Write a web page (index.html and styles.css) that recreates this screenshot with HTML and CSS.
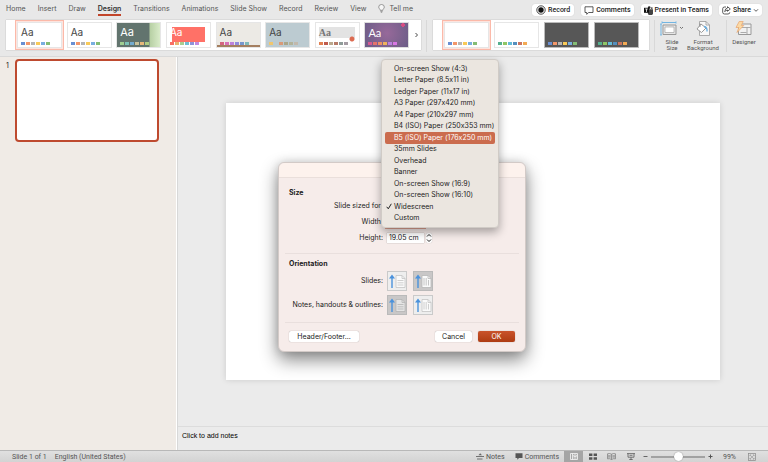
FILE: index.html
```html
<!DOCTYPE html>
<html lang="en">
<head>
<meta charset="utf-8">
<title>Presentation</title>
<link rel="stylesheet" href="styles.css">
</head>
<body>
<header class="top">
  <nav class="tabs">
    <a href="#">Home</a><a href="#">Insert</a><a href="#">Draw</a><a href="#" class="active">Design</a><a href="#">Transitions</a><a href="#">Animations</a><a href="#">Slide Show</a><a href="#">Record</a><a href="#">Review</a><a href="#">View</a>
    <a href="#" class="tell"><svg width="7" height="9" viewBox="0 0 7 9" fill="none" stroke="#777" stroke-width=".7"><path d="M2.2 6.3C2.2 5 .7 4.600 .7 3a2.800 2.500 0 0 1 5.600 0C6.300 4.600 4.800 5 4.800 6.300zM2.400 7.300h2.200M2.800 8.300h1.400" fill="#f6f6f6"/></svg>Tell me</a>
  </nav>
  <div class="actions">
    <button class="pill record"><svg width="10" height="10" viewBox="0 0 10 10"><circle cx="5" cy="5" r="4.200" fill="none" stroke="#222" stroke-width=".8"/><circle cx="5" cy="5" r="2.700" fill="#111"/></svg>Record</button>
    <button class="pill"><svg width="10" height="9" viewBox="0 0 10 9"><path d="M1 .8h8v5.700H4.700L2.700 8.300V6.500H1z" fill="none" stroke="#333" stroke-width=".8"/></svg>Comments</button>
    <button class="pill"><svg width="9" height="9" viewBox="0 0 9 9"><circle cx="5.200" cy="1.600" r="1.300" fill="#222"/><circle cx="7.800" cy="2.100" r=".9" fill="#444"/><path d="M3.500 3.200H9v3a2.600 2.600 0 0 1-5.200 1z" fill="#444"/><path d="M0 1.800h5v5H0z" fill="#111"/><path d="M1.200 3h2.600M2.500 3v2.900" stroke="#fff" stroke-width=".8"/></svg>Present in Teams</button>
    <button class="pill"><svg width="9" height="9" viewBox="0 0 9 9" fill="none" stroke="#333" stroke-width=".8"><path d="M4 1H2.500Q.7 1 .7 2.800v3.500Q.7 8 2.500 8H6q1.800 0 1.800-1.700"/><path d="M5.500.7 8.300 3 5.500 5.300V4Q3.800 4 2.800 5.700 3 2.200 5.500 2z"/></svg>Share<svg width="6" height="5" viewBox="0 0 6 5"><path d="M1 1.300l2 2 2-2" fill="none" stroke="#333" stroke-width=".8"/></svg></button>
  </div>
</header>

<section class="ribbon">
  <div class="gallery themes">
    <button class="thumb office picked"><span>Aa</span><i></i></button>
    <button class="thumb office"><span>Aa</span><i></i></button>
    <button class="thumb green"><span>Aa</span><i></i></button>
    <button class="thumb coral"><span>Aa</span><i></i></button>
    <button class="thumb wood"><span>Aa</span><i></i></button>
    <button class="thumb blue"><span>Aa</span><i></i></button>
    <button class="thumb stamp"><span>Aa</span><i></i></button>
    <button class="thumb ion"><span>Aa</span><i></i></button>
    <button class="more" aria-label="More themes"><svg width="5" height="6" viewBox="0 0 5 6"><path d="M1.500 1l2 2-2 2" fill="none" stroke="#333" stroke-width=".9"/></svg></button>
  </div>
  <div class="rule"></div>
  <div class="gallery variants">
    <button class="thumb office picked" aria-label="Variant 1"><i></i></button>
    <button class="thumb fresh" aria-label="Variant 2"><i></i></button>
    <button class="thumb office dark" aria-label="Variant 3"><i></i></button>
    <button class="thumb fresh dark" aria-label="Variant 4"><i></i></button>
  </div>
  <div class="rule"></div>
  <button class="tool size"><svg width="24" height="15" viewBox="0 0 24 15" fill="none"><path d="M2 1.500h14M1 3v11" stroke="#72b5e2"/><path d="M2 .3v2.400M16 .3v2.400M0 3h2M0 14h2" stroke="#72b5e2" stroke-width=".8"/><path d="M3 4h13v9.500H3z" fill="#e6e6e6" stroke="#999"/><path d="M5 6h9v5.500H5z" fill="#fff" stroke="#999" stroke-width=".6"/><path d="M20 6l1.500 1.500L23 6" stroke="#666" stroke-width=".9"/></svg>Slide<br>Size</button>
  <button class="tool format"><svg width="15" height="15" viewBox="0 0 15 15" fill="none"><path d="M3.500.5H10L13.500 4v10.500h-10z" fill="#f8f8f8" stroke="#999" stroke-width=".8"/><path d="M10 .5V4h3.500" stroke="#999" stroke-width=".8"/><path d="M5 3l5 4-4.500 4.500L1 8z" fill="#fff" stroke="#999"/><path d="M4 6V2.500" stroke="#888" stroke-width=".8"/><path d="M8 5.500q3.500.5 3 5" stroke="#68aee0" stroke-width="1.300"/></svg>Format<br>Background</button>
  <div class="rule"></div>
  <button class="tool designer"><svg width="18" height="15" viewBox="0 0 18 15" fill="none"><path d="M3.500 3h12.500v10.500h-12.500z" fill="#f1f1f1" stroke="#999"/><path d="M5.500 6.500h10M12 6.500v7M5.500 11.500h6" stroke="#999" stroke-width=".8"/><path d="M4.200.5h4L6.300 4.500h2.500L2 11.500l1.800-5H1z" fill="#fbd9a4" stroke="#eaa36a" stroke-width=".7"/></svg>Designer</button>
</section>

<main class="work">
  <aside class="slides"><span>1</span><button class="mini" aria-label="Slide 1"></button></aside>
  <section class="stage">
    <div class="canvas"><div class="slide"></div></div>
    <div class="notes">Click to add notes</div>
  </section>
</main>

<footer class="status">
  <span>Slide 1 of 1</span><span class="lang">English (United States)</span>
  <button class="st notesbtn"><svg width="8" height="7" viewBox="0 0 8 7"><path d="M0 3.500h8M1 6h5.500" stroke="#666" stroke-width=".9"/><path d="M2.500 2.300h3.500L4.200.3z" fill="#666"/></svg>Notes</button>
  <button class="st commentsbtn"><svg width="8" height="7" viewBox="0 0 8 7"><path d="M.5.300h7v4.700H4L2.300 6.700V5H.5z" fill="#555"/></svg>Comments</button>
  <button class="view on" aria-label="Normal"><svg width="8" height="7" viewBox="0 0 8 7"><path d="M.5.500h7v6h-7zM2.500.500v6M3.800 2h2.500v1.500H3.800zM3.500 5h3" fill="none" stroke="#f6f6f6" stroke-width=".8"/></svg></button>
  <button class="view" aria-label="Slide sorter"><svg width="8" height="7" viewBox="0 0 8 7" fill="#555"><path d="M0 .5h3.400V3H0zM4.600.500H8V3H4.600zM0 4.200h3.400v2.500H0zM4.600 4.200H8v2.500H4.600z"/></svg></button>
  <button class="view" aria-label="Reading view"><svg width="9" height="7" viewBox="0 0 9 7" fill="none" stroke="#777" stroke-width=".7"><path d="M4.500 1.200Q2.500 0 .5.800v5q2-.6 4 .700 2-1.300 4-.7v-5q-2-.8-4 .4zM4.500 1.200v5.300M1.800 2v2.700M3 2v2.700M6 2v2.700M7.200 2v2.700"/></svg></button>
  <button class="view" aria-label="Slide show"><svg width="8" height="7" viewBox="0 0 8 7" fill="none" stroke="#666" stroke-width=".9"><path d="M0 .6h8M1 .6v3.600h6V.600M4 4.200v2.300M2.300 6.500h3.400M2.500 2.300h3"/></svg></button>
  <button class="step" aria-label="Zoom out"><svg width="5" height="5" viewBox="0 0 5 5"><path d="M.5 2.500h4" stroke="#666"/></svg></button>
  <input class="zoom" type="range" min="0" max="100" value="50" aria-label="Zoom">
  <button class="step" aria-label="Zoom in"><svg width="5" height="5" viewBox="0 0 5 5"><path d="M.5 2.500h4M2.500.500v4" stroke="#555"/></svg></button>
  <span class="pct">99%</span>
  <button class="fit" aria-label="Fit slide"><svg width="8" height="8" viewBox="0 0 8 8" fill="none" stroke="#888" stroke-width=".7"><rect x=".5" y=".5" width="7" height="7"/><path d="M2 3V2h1M5 2h1v1M6 5v1H5M3 6H2V5M3.300 3.300l1.400 1.400M4.700 3.300L3.300 4.700"/></svg></button>
</footer>

<form class="dialog" role="dialog" aria-label="Page setup">
  <div class="titlebar"></div>
  <h2>Size</h2>
  <div class="row"><span class="label" id="sized">Slide sized for:</span>
    <div class="combo">
      <ul class="menu" role="listbox" aria-labelledby="sized">
        <li role="option">On-screen Show (4:3)</li>
        <li role="option">Letter Paper (8.5x11 in)</li>
        <li role="option">Ledger Paper (11x17 in)</li>
        <li role="option">A3 Paper (297x420 mm)</li>
        <li role="option">A4 Paper (210x297 mm)</li>
        <li role="option">B4 (ISO) Paper (250x353 mm)</li>
        <li role="option" class="hot">B5 (ISO) Paper (176x250 mm)</li>
        <li role="option">35mm Slides</li>
        <li role="option">Overhead</li>
        <li role="option">Banner</li>
        <li role="option">On-screen Show (16:9)</li>
        <li role="option">On-screen Show (16:10)</li>
        <li role="option" aria-selected="true"><svg width="6" height="7" viewBox="0 0 6 7"><path d="M.7 3.800l1.600 2L5.300.8" fill="none" stroke="#222"/></svg>Widescreen</li>
        <li role="option">Custom</li>
      </ul>
    </div>
  </div>
  <div class="row"><label class="label" for="w">Width:</label><input id="w" class="focus"></div>
  <div class="row"><label class="label" for="h">Height:</label><input id="h" value="19.05 cm"><button type="button" class="spin" aria-label="Change height"><svg width="6" height="10" viewBox="0 0 6 10" fill="none" stroke="#222" stroke-width="1"><path d="M1 3.500L3 1.500l2 2M1 6.500l2 2 2-2"/></svg></button></div>
  <hr>
  <h2>Orientation</h2>
  <div class="row pick"><span class="label">Slides:</span>
    <button type="button" class="orient" aria-label="Slides portrait"><svg width="18" height="18" viewBox="0 0 18 18"><path d="M4 16V4" stroke="#4a92dc" stroke-width="1.400"/><path d="M1 6.500L4 2.500 7 6.500z" fill="#4a92dc"/><path d="M8 3.500h6l3 3v9H8z" fill="#fafafa" stroke="#c4c4c4" stroke-width=".8"/><path d="M14 3.500v3h3M9.500 8.500h6M9.500 10.800h6M9.500 13h6" fill="none" stroke="#c4c4c4" stroke-width=".8"/></svg></button>
    <button type="button" class="orient on" aria-label="Slides landscape"><svg width="18" height="18" viewBox="0 0 18 18"><path d="M4 16V4" stroke="#4a92dc" stroke-width="1.400"/><path d="M1 6.500L4 2.500 7 6.500z" fill="#4a92dc"/><path d="M8 3.500h6l3 3v9H8z" fill="#fafafa" stroke="#b8b8b8" stroke-width=".8"/><path d="M14 3.500v3h3M10 6v7.500M12.200 6v7.500M14.500 8v5.500" fill="none" stroke="#b8b8b8" stroke-width=".8"/></svg></button>
  </div>
  <div class="row pick"><span class="label">Notes, handouts &amp; outlines:</span>
    <button type="button" class="orient on" aria-label="Notes portrait"><svg width="18" height="18" viewBox="0 0 18 18"><path d="M4 16V4" stroke="#4a92dc" stroke-width="1.400"/><path d="M1 6.500L4 2.500 7 6.500z" fill="#4a92dc"/><path d="M8 3.500h6l3 3v9H8z" fill="#e4e4e4" stroke="#b4b4b4" stroke-width=".8"/><path d="M14 3.500v3h3M9.500 8.500h6M9.500 10.800h6M9.500 13h6" fill="none" stroke="#b4b4b4" stroke-width=".8"/></svg></button>
    <button type="button" class="orient" aria-label="Notes landscape"><svg width="18" height="18" viewBox="0 0 18 18"><path d="M4 16V4" stroke="#4a92dc" stroke-width="1.400"/><path d="M1 6.500L4 2.500 7 6.500z" fill="#4a92dc"/><path d="M8 3.500h6l3 3v9H8z" fill="#fafafa" stroke="#c4c4c4" stroke-width=".8"/><path d="M14 3.500v3h3M10 6v7.500M12.200 6v7.500M14.500 8v5.500" fill="none" stroke="#c4c4c4" stroke-width=".8"/></svg></button>
  </div>
  <hr>
  <div class="buttons"><button type="button" class="hf">Header/Footer...</button><button type="button" class="cancel">Cancel</button><button type="button" class="ok">OK</button></div>
</form>
</body>
</html>
```
FILE: styles.css
```css
* { box-sizing: border-box; }
body {
  margin: 0; height: 100vh; overflow: hidden;
  display: flex; flex-direction: column; position: relative;
  font: 7px/10px Inter, "Liberation Sans", sans-serif;
  font-feature-settings: "calt" 0;
  color: #222; background: #e8e8e8;
}
button, input { font: inherit; color: inherit; margin: 0; padding: 0; border: 0; background: none; }
svg { display: block; flex: none; }
a { color: inherit; text-decoration: none; }

.top { height: 20px; flex: none; display: flex; justify-content: space-between; padding: 0 6px; }
.tabs { display: flex; gap: 12px; color: #555; }
.tabs a { height: 18px; padding-top: 4px; }
.tabs .active { height: 16px; color: #333; font-weight: 600; border-bottom: 2px solid #c2452a; }
.tabs .tell { display: flex; gap: 4px; }
.actions { display: flex; gap: 7px; padding-top: 4px; }
.pill {
  height: 12px; padding: 0 3px; border-radius: 3px; background: #fff;
  display: flex; align-items: center; gap: 2px; font-family: Roboto, Inter, sans-serif; font-weight: 500; color: #222;
  box-shadow: 0 0 1px #0003;
}
.record { padding: 0 4px; }

.ribbon { height: 37px; flex: none; display: flex; padding-left: 6px; border-bottom: 1px solid #d9d9d9; }
.gallery { height: 30px; display: flex; align-items: center; background: #fff; box-shadow: 0 0 1px #0005; }
.themes { width: 415px; padding-left: 11px; justify-content: space-between; }
.variants { width: 216px; padding-left: 11px; gap: 5px; }
.rule { width: 1px; height: 32px; background: #d8d8d8; margin: 0 6px 0 5px; }
.thumb {
  width: 45px; height: 26px; flex: none; padding: 5px 3px 2px 3px; border: 1px solid #e6e6e6; background: #fff;
  display: flex; flex-direction: column; align-items: flex-start;
  font-size: 10px; line-height: 11px; color: #444;
}
.thumb i {
  width: 30px; height: 3px; margin-top: auto;
  background: linear-gradient(90deg, var(--a) 5px, var(--b) 5px 10px, var(--c) 10px 15px, var(--d) 15px 20px, var(--e) 20px 25px, var(--f) 25px);
  mask: repeating-linear-gradient(90deg, #000 0 4px, transparent 4px 5px);
}
.thumb span { margin-top: -1px; }
.picked { outline: 1px solid #fbb9a9; outline-offset: 1px; box-shadow: 0 0 0 1px #fde4de; }
.more { width: 7px; }
.office { --a: #6a8fd2; --b: #f2966a; --c: #b5b5b5; --d: #f8ca58; --e: #79afe0; --f: #84bd75; }
.fresh { --a: #55b08f; --b: #90c666; --c: #64bcd8; --d: #548fbe; --e: #c97460; --f: #f3aa54; }
.green { --a: #a0cf91; --b: #7dc1b6; --c: #73abcf; --d: #c8c19a; --e: #e7b77b; --f: #aecb82; background: linear-gradient(90deg, #62746e 32px, #b7d0a4 33px, #d9ebc9); color: #fff; }
.coral { --a: #f76e64; --b: #e6b36f; --c: #a9cd91; --d: #72bcd2; --e: #8d93d9; --f: #c08bdf; background: linear-gradient(#ff7167, #ff7167) 5px 4px / 33px 15px no-repeat #fff; color: #fff; }
.wood { --a: #d4647e; --b: #d76fb6; --c: #bc81dc; --d: #8f8bdc; --e: #7797ce; --f: #7fb9b9; background: linear-gradient(#eceae5 0 22px, #a47f60 22px); }
.blue { --a: #f0c66e; --b: transparent; --c: #d99a78; --d: #aaa68b; --e: #b3b39a; --f: #c2b9ad; background: #bccbd1; }
.stamp { --a: #e18152; --b: #bf5b4d; --c: #baa88d; --d: #b67a68; --e: #8f9b99; --f: #a49ba3; background: radial-gradient(circle at 36px 16px, #dc6b51 2px, transparent 3px), linear-gradient(#e3e3e3, #e3e3e3) 3px 4px / 36px 11px no-repeat #fff; font-family: "Liberation Serif", serif; font-weight: 700; color: #777; }
.ion { --a: #d65a92; --b: #e5736c; --c: #ef9065; --d: #efb25d; --e: #bb80e0; --f: #d977e4; background: radial-gradient(circle at 38px 2px, #d94d82 2px, transparent 2px), radial-gradient(circle at 22px 10px, #97699a, #635b83 30px); border-color: #ddd; color: #fff; font-family: Lato, sans-serif; }
.ion span, .green span { font-size: 11px; }
.dark { background: #575757; border-color: #bbb; }
.tool { display: flex; flex-direction: column; align-items: center; gap: 3px; padding-top: 1px; font: 6px/6px Roboto, Inter, sans-serif; color: #555; height: 34px; }
.size { width: 26px; margin-left: -2px; }
.format { width: 36px; }
.designer { width: 24px; margin-left: -1px; }

.work { flex: 1; display: flex; min-height: 0; }
.slides { width: 177px; flex: none; display: flex; align-items: flex-start; gap: 6px; padding: 2px 6px; background: #f0ebe6; border-right: 1px solid #fff; }
.slides span { width: 3px; margin-top: 1px; padding-top: 1px; }
.mini { width: 144px; height: 83px; background: #fff; border: 2px solid #be4a2f; border-radius: 4px; }
.stage { flex: 1; display: flex; flex-direction: column; border-left: 1px solid #d8d8d8; background: #ebebeb; }
.canvas { flex: 1; padding: 46px 48px; border-bottom: 1px solid #dcdcdc; }
.slide { height: 100%; background: #fff; box-shadow: 0 0 6px #0002; }
.notes { height: 23px; padding: 4px; font-family: "Liberation Sans", sans-serif; color: #000; }

.status { height: 12px; flex: none; display: flex; align-items: center; padding: 0 12px; border-top: 1px solid #b8b8b8; background: linear-gradient(#e0e0e0, #d3d3d3); color: #555; font-family: Roboto, Inter, sans-serif; }
.lang { margin-left: 8px; }
.st { display: flex; align-items: center; gap: 2px; }
.notesbtn { margin-left: auto; }
.commentsbtn { margin: 0 5px 0 10px; }
.view { width: 19px; height: 11px; display: flex; align-items: center; justify-content: center; }
.view.on { background: #a5a5a5; }
.step { margin: 0 3px; }
.zoom { appearance: none; width: 54px; height: 9px; }
.zoom::-webkit-slider-runnable-track { height: 2px; background: #a2a2a2; }
.zoom::-webkit-slider-thumb { appearance: none; width: 9px; height: 9px; margin-top: -4px; border-radius: 50%; background: #fff; box-shadow: 0 0 1px #0008; }
.pct { margin: 0 12px 0 7px; }

.dialog {
  position: absolute; left: 278px; top: 162px; width: 248px; padding-bottom: 9px;
  border: 1px solid #d3cac7; border-radius: 6px; background: #f6ecea;
  box-shadow: 0 8px 18px #0007, 0 0 10px #0002;
}
.titlebar { height: 15px; border-bottom: 1px solid #eadfdb; border-radius: 6px 6px 0 0; background: #fdf2ed; margin-bottom: 10px; }
.dialog h2 { margin: 0 10px; font-size: 7px; line-height: 10px; font-weight: 700; }
.row { height: 16px; display: flex; align-items: center; gap: 4px; }
.label { width: 104px; text-align: right; }
.row input { width: 37px; height: 10px; padding-left: 2px; background: #fff; box-shadow: 0 0 1px #0006; }
.row .focus { outline: 2px solid #dfa392; }
.spin { width: 6px; height: 10px; border-radius: 2px; background: #fff; box-shadow: 0 0 1px #0004; margin-left: -2px; }
.dialog hr { height: 1px; border: 0; margin: 7px 6px 5px; background: #e9dfdd; }
.pick { height: 24px; gap: 6px; }
.pick .label { width: 104px; margin-right: -2px; }
.dialog .pick + hr { margin: 5px 6px 8px; }
.orient { width: 20px; height: 20px; border: 1px solid #cacaca; background: #eee; }
.orient.on { background: #c9c7c7; border-color: #bababa; }
.buttons { display: flex; gap: 6px; padding: 0 10px; }
.buttons button { height: 11px; border-radius: 2px; background: #fff; box-shadow: 0 0 1px #0006; line-height: 11px; }
.buttons .hf { width: 70px; margin-right: auto; }
.buttons .cancel, .buttons .ok { width: 37px; }
.buttons .ok { background: linear-gradient(#c9532b, #ae3c12); color: #fff; }

.combo { position: relative; height: 10px; }
.menu {
  position: absolute; left: -6px; bottom: -17px; width: 118px; height: 169px; margin: 0; padding: 3px;
  display: grid; grid-template-rows: repeat(14, 1fr); list-style: none;
  background: #ebe6e0; border: 1px solid #d0cbc6; border-radius: 4px; box-shadow: 0 4px 10px #0005; z-index: 2;
}
.menu li { display: flex; align-items: center; padding-left: 9px; border-radius: 2px; white-space: nowrap; }
.menu li svg { margin: 0 2px 0 -8px; }
.menu .hot { background: #cb6c4e; color: #fff; }
```
